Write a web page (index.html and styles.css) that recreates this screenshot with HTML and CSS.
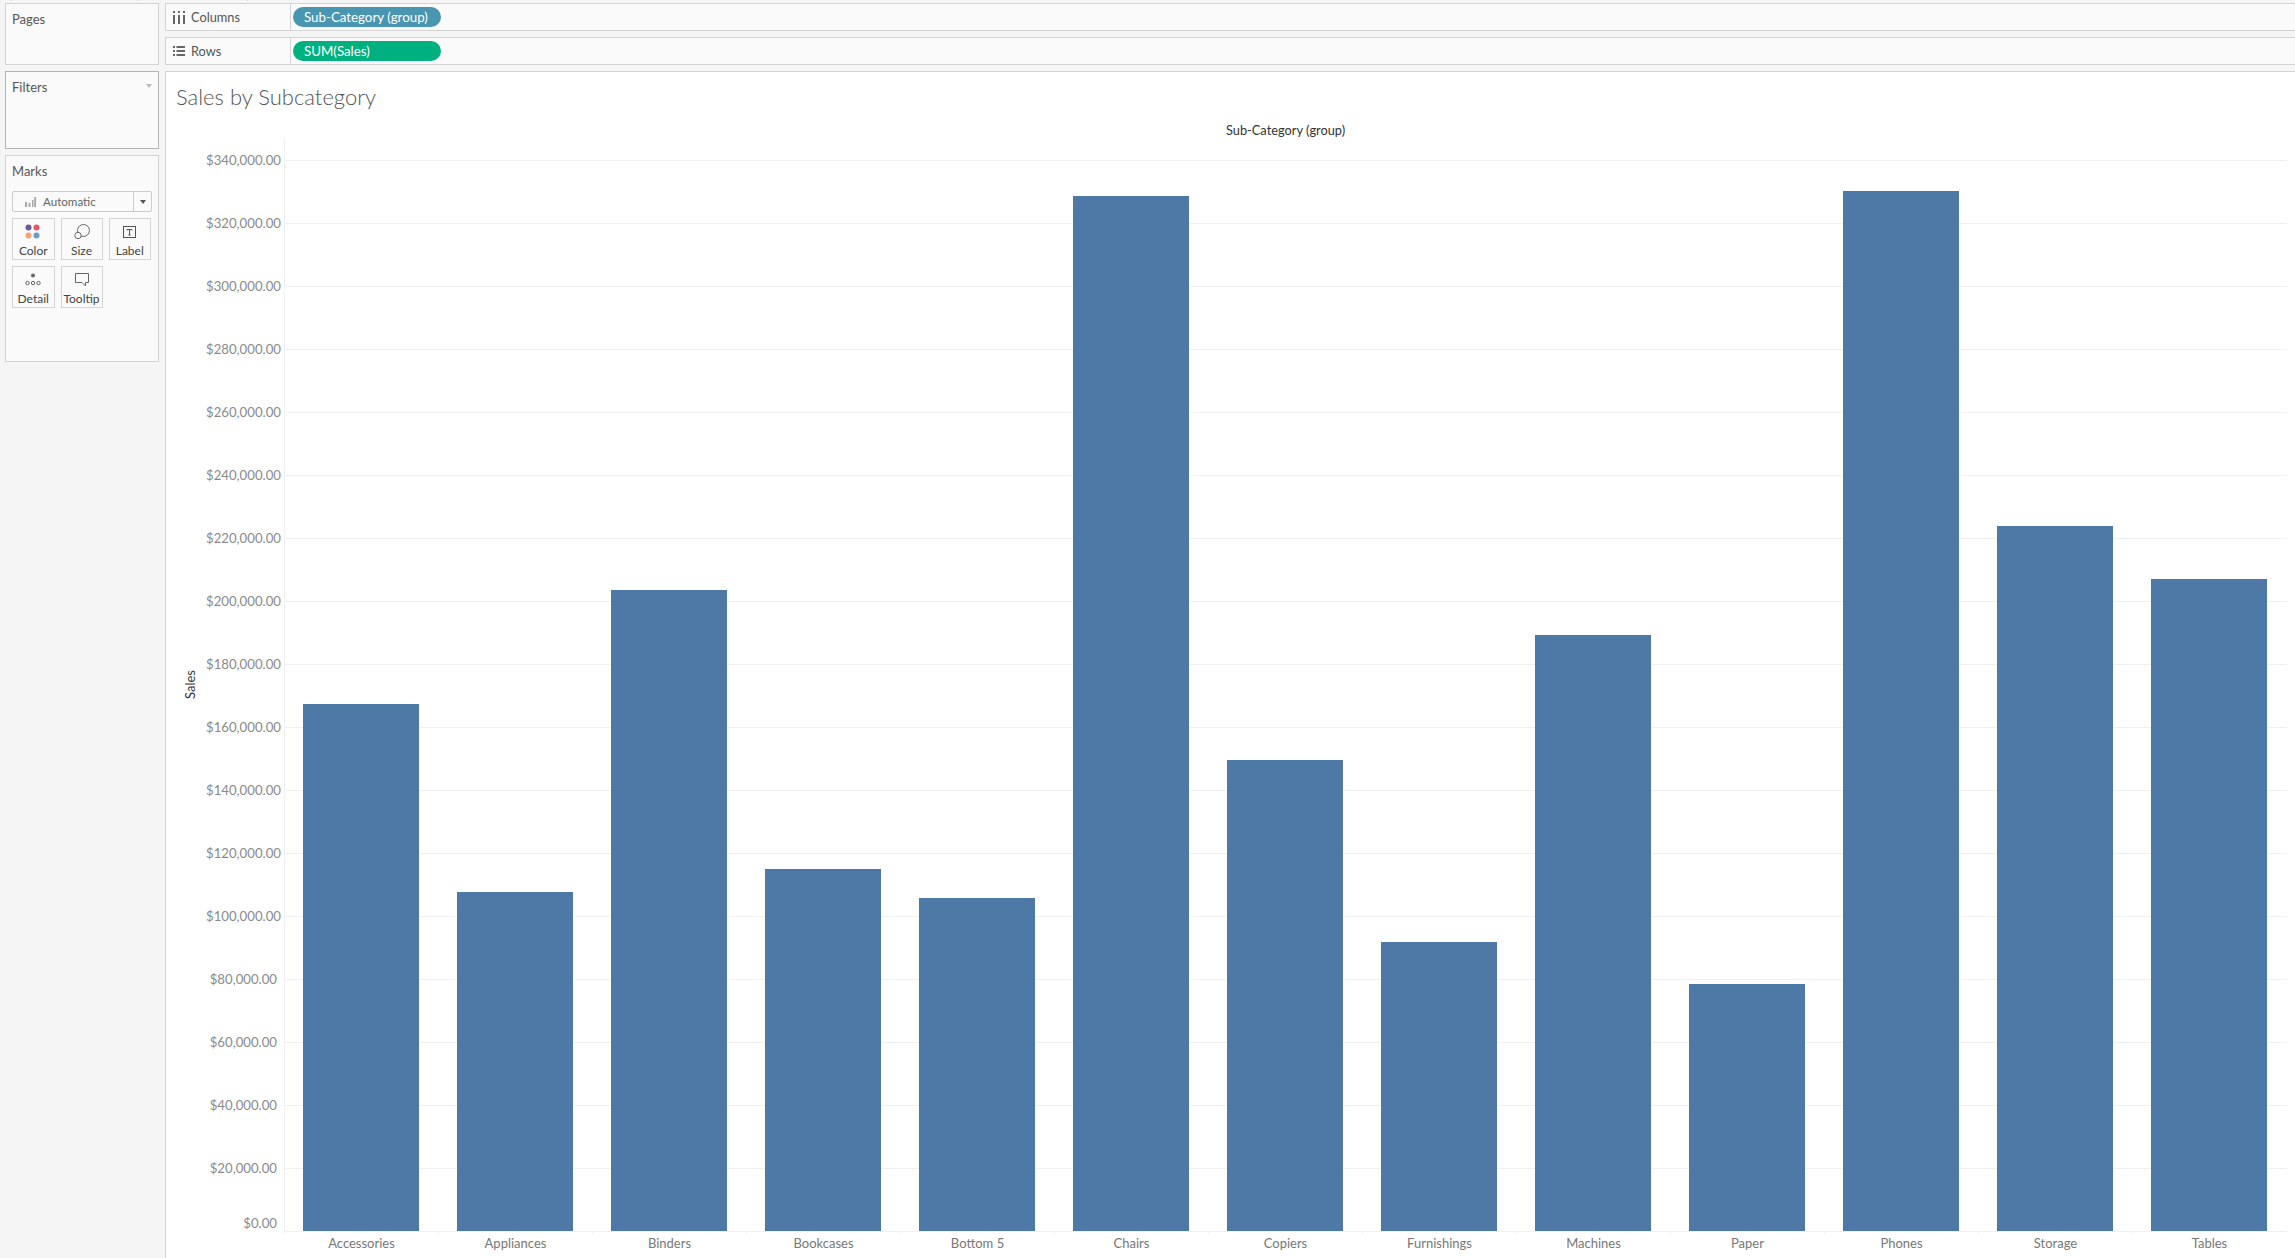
FILE: index.html
```html
<!DOCTYPE html>
<html lang="en">
<head>
<meta charset="utf-8">
<title>Sales by Subcategory</title>
<link rel="stylesheet" href="styles.css">
</head>
<body>
<div class="topmarks"><i></i><i></i><i></i></div>
<div class="app">
  <aside class="side">
    <section class="panel pages"><h2 class="panel-title">Pages</h2></section>
    <section class="panel filters"><h2 class="panel-title">Filters</h2><span class="caret caret-light"></span></section>
    <section class="panel marks">
      <h2 class="panel-title">Marks</h2>
      <div class="mark-select">
        <svg class="auto-icon" width="11" height="10" viewBox="0 0 11 10"><path d="M0 5h2v5H0zM3.500 6h2v4h-2zM7 3h1.500v7H7zM9.200 0h1.800v10H9.200z" fill="#a9a9a9"/></svg>
        <span class="mark-type">Automatic</span>
        <span class="mark-arrow"><span class="caret"></span></span>
      </div>
      <div class="cards">
        <div class="card">
          <svg width="16" height="16" viewBox="0 0 16 16"><circle cx="3.500" cy="3.500" r="3" fill="#6f5b93"/><circle cx="11.500" cy="3.500" r="3" fill="#e8526a"/><circle cx="3.500" cy="11.500" r="3" fill="#f2a46e"/><circle cx="11.500" cy="11.500" r="3" fill="#6e9aca"/></svg>
          <span>Color</span>
        </div>
        <div class="card">
          <svg width="16" height="16" viewBox="0 0 16 16" fill="#fafafa" stroke="#666" stroke-width="1"><circle cx="9.500" cy="6.500" r="6"/><circle cx="4" cy="11.500" r="3.200"/></svg>
          <span>Size</span>
        </div>
        <div class="card">
          <svg width="16" height="16" viewBox="0 0 16 16" fill="none" stroke="#555" stroke-width="1"><rect x="1.500" y="2.500" width="12" height="11"/><path d="M5 6.500V5.500h5v1M7.500 5.500v5.500M6.300 11h2.400"/></svg>
          <span>Label</span>
        </div>
        <div class="card">
          <svg width="16" height="16" viewBox="0 0 16 16"><circle cx="8" cy="3.500" r="2" fill="#666"/><g fill="none" stroke="#666"><circle cx="2.500" cy="11" r="1.700"/><circle cx="8" cy="11" r="1.700"/><circle cx="13.500" cy="11" r="1.700"/></g></svg>
          <span>Detail</span>
        </div>
        <div class="card">
          <svg width="16" height="16" viewBox="0 0 16 16" fill="none" stroke="#666"><path d="M1.500 1.500h13v9h-3v3.500l-3.500-3.500h-6.500z"/></svg>
          <span>Tooltip</span>
        </div>
      </div>
    </section>
  </aside>
  <main class="work">
    <div class="shelf">
      <div class="shelf-label">
        <svg width="12" height="13" viewBox="0 0 12 13" fill="#666"><path d="M0 0h2v2H0zM5 0h2v2H5zM10 0h2v2h-2zM0 4h2v9H0zM5 4h2v9H5zM10 4h2v9h-2z"/></svg>
        <span>Columns</span>
      </div>
      <div class="pill pill-blue">Sub-Category (group)</div>
    </div>
    <div class="shelf">
      <div class="shelf-label">
        <svg width="12" height="10" viewBox="0 0 12 10" fill="#666"><path d="M0 0h2v2H0zM3.500 0H12v2H3.500zM0 4h2v2H0zM3.500 4H12v2H3.500zM0 8h2v2H0zM3.500 8H12v2H3.500z"/></svg>
        <span>Rows</span>
      </div>
      <div class="pill pill-green">SUM(Sales)</div>
    </div>
    <div class="view">
      <h1 class="title">Sales by Subcategory</h1>
      <div class="chart">
        <div class="axis-title"><span>Sales</span></div>
        <div class="y-axis">
          <div class="tick">$340,000.00</div><div class="tick">$320,000.00</div><div class="tick">$300,000.00</div><div class="tick">$280,000.00</div><div class="tick">$260,000.00</div><div class="tick">$240,000.00</div><div class="tick">$220,000.00</div><div class="tick">$200,000.00</div><div class="tick">$180,000.00</div><div class="tick">$160,000.00</div><div class="tick">$140,000.00</div><div class="tick">$120,000.00</div><div class="tick">$100,000.00</div><div class="tick">$80,000.00</div><div class="tick">$60,000.00</div><div class="tick">$40,000.00</div><div class="tick">$20,000.00</div><div class="tick tick-zero">$0.00</div>
        </div>
        <div class="plot-col">
          <div class="x-title">Sub-Category (group)</div>
          <div class="plot">
            <div class="grid">
              <div class="grid-first"></div>
              <div class="grid-row"></div><div class="grid-row"></div><div class="grid-row"></div><div class="grid-row"></div><div class="grid-row"></div><div class="grid-row"></div><div class="grid-row"></div><div class="grid-row"></div><div class="grid-row"></div><div class="grid-row"></div><div class="grid-row"></div><div class="grid-row"></div><div class="grid-row"></div><div class="grid-row"></div><div class="grid-row"></div><div class="grid-row"></div><div class="grid-row"></div>
            </div>
            <div class="bars">
              <div class="band"><div class="bar" style="height:527px"></div></div>
              <div class="band"><div class="bar" style="height:339px"></div></div>
              <div class="band"><div class="bar" style="height:641px"></div></div>
              <div class="band"><div class="bar" style="height:362px"></div></div>
              <div class="band"><div class="bar" style="height:333px"></div></div>
              <div class="band"><div class="bar" style="height:1035px"></div></div>
              <div class="band"><div class="bar" style="height:471px"></div></div>
              <div class="band"><div class="bar" style="height:289px"></div></div>
              <div class="band"><div class="bar" style="height:596px"></div></div>
              <div class="band"><div class="bar" style="height:247px"></div></div>
              <div class="band"><div class="bar" style="height:1040px"></div></div>
              <div class="band"><div class="bar" style="height:705px"></div></div>
              <div class="band"><div class="bar" style="height:652px"></div></div>
            </div>
          </div>
          <div class="x-axis">
            <div class="x-label">Accessories</div><div class="x-label">Appliances</div><div class="x-label">Binders</div><div class="x-label">Bookcases</div><div class="x-label">Bottom 5</div><div class="x-label">Chairs</div><div class="x-label">Copiers</div><div class="x-label">Furnishings</div><div class="x-label">Machines</div><div class="x-label">Paper</div><div class="x-label">Phones</div><div class="x-label">Storage</div><div class="x-label">Tables</div>
          </div>
        </div>
      </div>
    </div>
  </main>
</div>
</body>
</html>
```

FILE: styles.css
```css
* { box-sizing: border-box; }
html, body { margin: 0; height: 100%; }
body {
  background: #f5f5f5;
  font-family: Lato, "Open Sans", "Liberation Sans", sans-serif;
  color: #555;
  overflow: hidden;
}
.topmarks { height: 3px; display: flex; }
.topmarks i { width: 1px; height: 1px; background: #d4d4d4; margin-left: 125px; }
.topmarks i:first-child { margin-left: 11px; }
.topmarks i:last-child { margin-left: 109px; }
.app { display: flex; height: 1255px; padding-left: 5px; gap: 6px; }
.side { width: 154px; flex: none; display: flex; flex-direction: column; gap: 6px; }
.panel { background: #fafafa; border: 1px solid #d4d4d4; padding: 8px 6px 0; position: relative; }
.pages { height: 62px; }
.filters { height: 78px; border-color: #b4b4b4; }
.marks { height: 207px; }
.panel-title { margin: 0; font-size: 13px; font-weight: 400; line-height: 14px; color: #555; }
.caret { width: 0; height: 0; border-left: 3.500px solid transparent; border-right: 3.500px solid transparent; border-top: 4px solid #555; display: block; }
.caret-light { position: absolute; right: 6px; top: 12px; border-top-color: #bbb; }
.mark-select { margin-top: 13px; height: 21px; border: 1px solid #ccc; border-radius: 2px; display: flex; align-items: center; padding-left: 12px; background: #fafafa; }
.auto-icon { flex: none; }
.mark-type { font-size: 11.600px; color: #666; margin-left: 7px; flex: 1; }
.mark-arrow { width: 18px; height: 100%; border-left: 1px solid #ccc; display: flex; align-items: center; justify-content: center; }
.cards { display: grid; grid-template-columns: 42.500px 42px 42.500px; column-gap: 6px; row-gap: 6px; margin-top: 6px; width: 139px; }
.card { height: 42px; border: 1px solid #d4d4d4; display: flex; flex-direction: column; align-items: center; padding-top: 5px; }
.card svg { flex: none; }
.card span { font-size: 12px; line-height: 14px; color: #444; margin-top: 4px; }
.work { flex: 1; min-width: 0; display: flex; flex-direction: column; gap: 6px; }
.shelf { height: 28px; flex: none; background: #fafafa; border: 1px solid #d4d4d4; border-right: 0; display: flex; align-items: center; }
.shelf-label { width: 125px; height: 100%; border-right: 1px solid #d4d4d4; display: flex; align-items: center; padding-left: 7px; font-size: 12.800px; color: #555; gap: 6px; flex: none; }
.pill { width: 148px; height: 20px; border-radius: 10px; margin-left: 2px; color: #fff; font-size: 13.300px; line-height: 20px; padding-left: 11px; white-space: nowrap; }
.pill-blue { background: #4996b2; }
.pill-green { background: #00b180; }
.view { flex: 1; min-height: 0; background: #fff; border-top: 1px solid #d4d4d4; border-left: 1px solid #d4d4d4; display: flex; flex-direction: column; }
.title { margin: 0; height: 57px; padding: 11px 0 0 10px; font-size: 22px; line-height: 28px; font-weight: 300; color: #555; }
.chart { display: flex; flex: 1; min-height: 0; }
.axis-title { width: 40px; flex: none; height: 1110px; display: flex; align-items: center; justify-content: center; padding-left: 8px; }
.axis-title span { writing-mode: vertical-rl; transform: rotate(180deg); font-size: 13px; color: #333; }
.y-axis { width: 71px; flex: none; text-align: right; }
.tick { height: 63px; line-height: 63px; font-size: 13.200px; color: #8a8a8a; white-space: nowrap; }
.tick-zero { height: 47px; line-height: 47px; }
.plot-col { margin-left: 7px; width: 2003px; flex: none; position: relative; }
.x-title { height: 10px; text-align: center; font-size: 12.800px; line-height: 2px; color: #333; white-space: nowrap; }
.plot { position: relative; height: 1093px; }
.grid { position: absolute; inset: 0; border-left: 1px solid #f0f0f0; }
.grid-first { height: 22px; border-bottom: 1px solid #f0f0f0; }
.grid-row { height: 63px; border-bottom: 1px solid #f0f0f0; }
.bars { position: absolute; inset: 0 0 1px 0; display: flex; align-items: flex-end; }
.band { width: 154px; flex: none; display: flex; justify-content: center; }
.bar { width: 116px; background: #4e79a7; }
.x-axis { display: flex; }
.x-label { width: 154px; height: 25px; border-left: 1px solid #f0f0f0; border-image: linear-gradient(#f0f0f0 3px, transparent 3px) 1; text-align: center; font-size: 13px; line-height: 22px; color: #777; white-space: nowrap; }
```
